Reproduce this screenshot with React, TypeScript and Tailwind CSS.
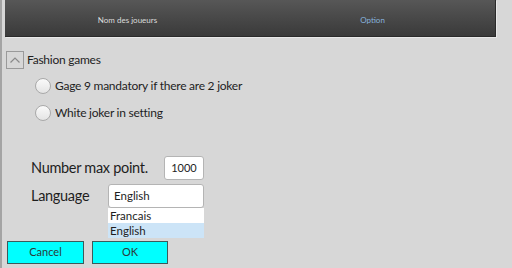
import React from "react";

const font = { fontFamily: 'Lato, "Noto Sans", sans-serif' };

function Radio({label}: {label: string}) {
  return (
    <div className="flex items-center h-[27px] pl-[33px]">
      <span className="w-[16px] h-[16px] rounded-full border border-[#a9a9a9] bg-gradient-to-b from-[#fafafa] to-[#e4e4e4]" />
      <span className="ml-[4px] text-[12px] tracking-[-0.25px] text-[#1e1e1e]">{label}</span>
    </div>
  );
}

export default function App() {
  return (
    <div className="w-[512px] h-[268px] bg-[#d7d7d7] border-l-2 border-[#a4a4a4] overflow-hidden" style={font}>
      <div className="ml-[3px] w-[491px] h-[37px] grid grid-cols-2 items-center pt-[3px] bg-gradient-to-b from-[#575757] to-[#3a3a3a] border-b border-r border-[#2a2a2a] shadow-[1px_1px_0_#e8e8e8]">
        <span className="text-center text-[8px] text-[#dcdcdc]">Nom des joueurs</span>
        <span className="text-center text-[8px] text-[#86b2dc]">Option</span>
      </div>

      <div className="mt-[14px] pl-[4px] flex items-center h-[18px]">
        <span className="w-[18px] h-[18px] border border-[#9a9a9a] flex items-center justify-center">
          <svg width="12" height="8" viewBox="0 0 12 8">
            <path d="M1.5 6.5 L6 2 L10.5 6.5" fill="none" stroke="#8a8a8a" strokeWidth="1.2" />
          </svg>
        </span>
        <span className="ml-[3px] text-[12px] tracking-[-0.25px] text-[#1e1e1e]">Fashion games</span>
      </div>

      <div className="mt-[3px]">
        <Radio label="Gage 9 mandatory if there are 2 joker" />
        <Radio label="White joker in setting" />
      </div>

      <div className="mt-[30px] pl-[29px] flex items-center h-[24px]">
        <span className="w-[133px] whitespace-nowrap text-[14.5px] tracking-[-0.3px] text-[#1e1e1e]">Number max point.</span>
        <span className="w-[40px] h-[24px] bg-white border border-[#b4b4b4] rounded-[3px] flex items-center justify-center text-[11px] text-[#1e1e1e]">1000</span>
      </div>

      <div className="mt-[4px] pl-[29px] flex items-center h-[24px]">
        <span className="w-[77px] text-[14.5px] tracking-[-0.3px] text-[#1e1e1e]">Language</span>
        <span className="w-[96px] h-[24px] bg-white border border-[#b4b4b4] rounded-[3px] flex items-center pl-[5px] text-[11.5px] text-[#1e1e1e]">English</span>
      </div>

      <div className="ml-[106px] w-[96px] flex flex-col text-[11.5px] text-[#1e1e1e]">
        <span className="h-[15px] leading-[15px] bg-white pl-[2px]">Francais</span>
        <span className="h-[15px] leading-[15px] bg-[#cce4f7] pl-[2px]">English</span>
      </div>

      <div className="mt-[3px] pl-[5px] flex gap-[8px]">
        <button className="w-[77px] h-[23px] bg-[#00ffff] border border-[#3c5a5a] text-[11px] text-[#2a3a3a]">Cancel</button>
        <button className="w-[76px] h-[23px] bg-[#00ffff] border border-[#3c5a5a] text-[11px] text-[#2a3a3a]">OK</button>
      </div>
    </div>
  );
}
